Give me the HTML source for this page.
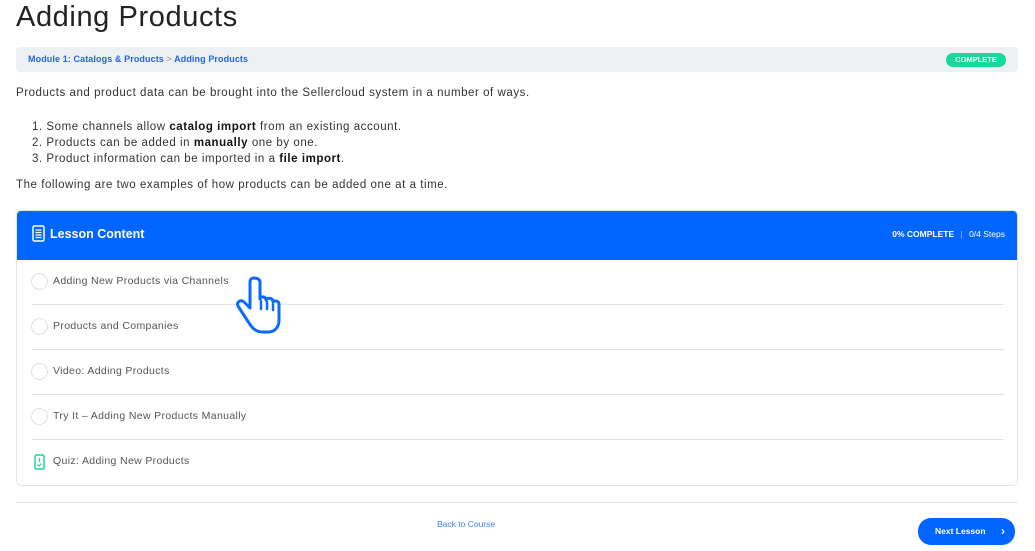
<!DOCTYPE html><html><head><style>
body{margin:0;background:#fff;font-family:"Liberation Sans",sans-serif;color:#333;width:1035px;height:551px;overflow:hidden;position:relative}
.a{position:absolute}
h1{position:absolute;left:16px;top:1px;margin:0;font-weight:normal;font-size:29px;color:#222;letter-spacing:0.6px}
.bc{left:16px;top:47px;width:1002px;height:25px;background:#eef1f4;border-radius:4px}
.bc span{position:absolute;left:12px;top:7px;font-size:9px;font-weight:bold;color:#2563eb;letter-spacing:0.1px}
.badge{position:absolute;right:12px;top:6px;width:60px;height:14px;border-radius:7px;background:#18d99a;color:#fff;font-size:7.5px;font-weight:bold;text-align:center;line-height:14px}
.t{font-size:11.5px;color:#333;letter-spacing:0.55px}
.box{left:16px;top:210px;width:1000px;height:274px;border:1px solid #e2e6ea;border-radius:5px;overflow:hidden}
.hd{position:absolute;left:-1px;top:-1px;width:1002px;height:50px;background:#0066ff;color:#fff}
.row{position:absolute;left:15px;width:972px;height:44px;border-bottom:1px solid #e2e6ea}
.row .c{position:absolute;left:-1px;top:13px;width:15px;height:15px;border:1px solid #dde2e7;border-radius:50%}
.row .l{position:absolute;left:21px;top:15px;font-size:10.5px;color:#555;letter-spacing:0.35px}
</style></head><body>
<h1>Adding Products</h1>
<div class="a bc"><span>Module 1: Catalogs &amp; Products <b style="color:#888;font-weight:normal">&gt;</b> Adding Products</span><div class="badge">COMPLETE</div></div>
<div class="a t" style="left:16px;top:87px">Products and product data can be brought into the Sellercloud system in a number of ways.</div>
<div class="a t" style="left:32px;top:119px;line-height:16px">1. Some channels allow <b style="color:#111">catalog import</b> from an existing account.<br>2. Products can be added in <b style="color:#111">manually</b> one by one.<br>3. Product information can be imported in a <b style="color:#111">file import</b>.</div>
<div class="a t" style="left:16px;top:179px">The following are two examples of how products can be added one at a time.</div>
<div class="a box">
<div class="hd">
<svg class="a" style="left:16px;top:15px" width="13" height="17" viewBox="0 0 13 17"><rect x="1" y="1" width="11" height="15" rx="1.5" fill="none" stroke="#fff" stroke-width="1.5"/><path d="M3.5 5h6M3.5 7.5h6M3.5 10h6M3.5 12.5h6" stroke="#fff" stroke-width="1.2"/></svg>
<div class="a" style="left:34px;top:17px;font-size:12.5px;font-weight:bold">Lesson Content</div>
<div class="a" style="right:13px;top:19px;font-size:8.5px"><b>0% COMPLETE</b> <span style="opacity:.6;margin:0 4px">|</span> 0/4 Steps</div>
</div>
<div class="row" style="top:49px"><div class="c"></div><div class="l">Adding New Products via Channels</div></div>
<div class="row" style="top:94px"><div class="c"></div><div class="l">Products and Companies</div></div>
<div class="row" style="top:139px"><div class="c"></div><div class="l">Video: Adding Products</div></div>
<div class="row" style="top:184px"><div class="c"></div><div class="l">Try It – Adding New Products Manually</div></div>
<div class="row" style="top:229px;border:0"><svg class="a" style="left:2px;top:14px" width="11" height="16" viewBox="0 0 11 16"><rect x="1" y="1" width="9" height="14" rx="1.5" fill="none" stroke="#18d99a" stroke-width="1.5"/><path d="M5.5 4v4M3.5 10.5l1.5 1.5 2.5-2.5" stroke="#18d99a" stroke-width="1.2" fill="none"/></svg><div class="l">Quiz: Adding New Products</div></div>
</div>
<svg class="a" style="left:232px;top:274px" width="52" height="64" viewBox="0 0 52 64"><path d="M22 4c-3 0-4 2-4 4v26l-6-6c-3-3-8 0-6 4l11 17c3 5 7 9 13 9h6c7 0 11-5 11-12V30c0-3-4-4-6-2 0-4-5-5-7-2 0-4-5-4-6-1V8c0-2-2-4-6-4z" fill="#fff" stroke="#0a6cff" stroke-width="3" stroke-linejoin="round"/><path d="M29 27v8M35 28v7M41 30v6" stroke="#0a6cff" stroke-width="2.5" stroke-linecap="round"/></svg>
<div class="a" style="left:16px;top:502px;width:1002px;height:1px;background:#e2e6ea"></div>
<div class="a" style="left:437px;top:519px;font-size:8.5px;color:#3b82f6">Back to Course</div>
<div class="a" style="left:918px;top:518px;width:97px;height:27px;border-radius:13px;background:#0066ff;color:#fff;font-size:8.5px;font-weight:bold;line-height:27px"><span style="margin-left:17px">Next Lesson</span><span style="position:absolute;right:10px;font-size:12px">›</span></div>
</body></html>
